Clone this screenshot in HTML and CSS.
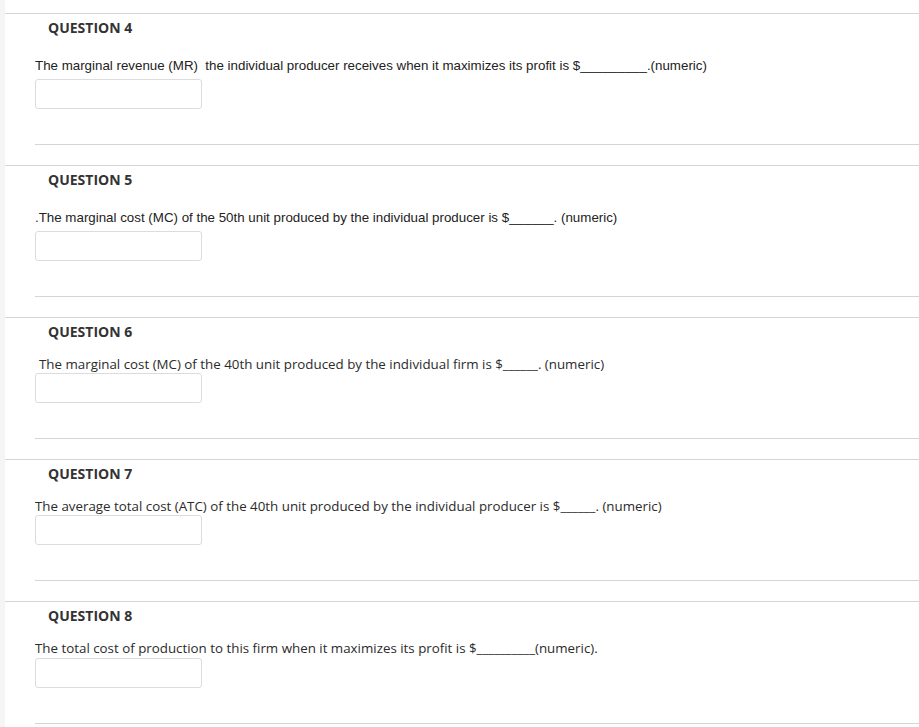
FILE: index.html
```html
<!DOCTYPE html>
<html>
<head>
<meta charset="utf-8">
<link rel="stylesheet" href="styles.css">
</head>
<body>
<div class="page">
  <div class="content">
    <section class="question tall">
      <h3 class="q-title">QUESTION 4</h3>
      <div class="q-body">
        <p class="q-text arial">The marginal revenue (MR)&nbsp; the individual producer receives when it maximizes its profit is $_________.(numeric)</p>
        <input class="answer" type="text">
      </div>
    </section>
    <section class="question tall">
      <h3 class="q-title">QUESTION 5</h3>
      <div class="q-body">
        <p class="q-text arial">.The marginal cost (MC) of the 50th unit produced by the individual producer is $______. (numeric)</p>
        <input class="answer" type="text">
      </div>
    </section>
    <section class="question">
      <h3 class="q-title">QUESTION 6</h3>
      <div class="q-body">
        <p class="q-text indent">The marginal cost (MC) of the 40th unit produced by the individual firm is $______. (numeric)</p>
        <input class="answer" type="text">
      </div>
    </section>
    <section class="question">
      <h3 class="q-title">QUESTION 7</h3>
      <div class="q-body">
        <p class="q-text">The average total cost (ATC) of the 40th unit produced by the individual producer is $______. (numeric)</p>
        <input class="answer" type="text">
      </div>
    </section>
    <section class="question last">
      <h3 class="q-title">QUESTION 8</h3>
      <div class="q-body">
        <p class="q-text">The total cost of production to this firm when it maximizes its profit is $__________(numeric).</p>
        <input class="answer" type="text">
      </div>
    </section>
  </div>
</div>
</body>
</html>
```
FILE: styles.css
```css
html, body {
  margin: 0;
  padding: 0;
  background: #ffffff;
}
body {
  font-family: "Open Sans", "Liberation Sans", sans-serif;
  color: #333333;
}
.page {
  display: flex;
  min-height: 727px;
  background: #f5f5f5;
  padding-left: 5px;
}
.content {
  flex: 1;
  background: #ffffff;
  padding-top: 13px;
}
.question {
  border-top: 1px solid #d5d5d5;
  padding: 4px 0 20px 30px;
}
.q-title {
  margin: 0 0 14px 13px;
  font-size: 14px;
  line-height: 20px;
  font-weight: 700;
  color: #333333;
}
.q-body {
  border-bottom: 1px solid #d5d5d5;
  padding-bottom: 35px;
}
.q-text {
  margin: 0;
  font-size: 13.333px;
  line-height: 17px;
  color: #2b2b2b;
  white-space: nowrap;
}
.q-text.arial {
  font-family: "Liberation Sans", Arial, sans-serif;
  line-height: 27px;
  color: #222222;
}
.q-text.indent {
  padding-left: 4px;
}
.last .q-text {
  margin-bottom: 1px;
}
.answer {
  display: block;
  box-sizing: border-box;
  width: 167px;
  height: 30px;
  margin: 0;
  border: 1px solid #dcdcdc;
  border-radius: 3px;
  background: #ffffff;
  outline: none;
}
```
